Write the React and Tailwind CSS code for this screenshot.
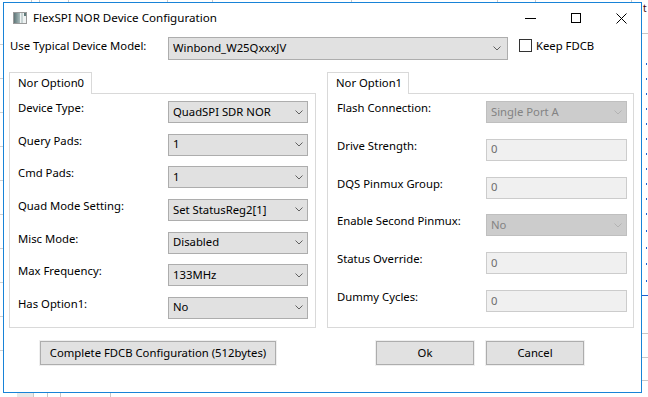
import React from 'react';
import clsx from 'clsx';

// ── small drawings ───────────────────────────────────────────────────────────
const Chevron = ({ color = '#606060' }) => (
  <svg width="8" height="5" viewBox="0 0 8 5" className="shrink-0">
    <polyline points="0.5,0.5 4,4 7.5,0.5" fill="none" stroke={color} strokeWidth="1" />
  </svg>
);

const AppIcon = () => (
  <svg width="14" height="12" viewBox="0 0 14 12" className="shrink-0">
    <defs>
      <linearGradient id="ic" x1="0" y1="0" x2="1" y2="0">
        <stop offset="0" stopColor="#5f7678" />
        <stop offset="1" stopColor="#a9bcbc" />
      </linearGradient>
    </defs>
    <rect x="0.5" y="0.5" width="13" height="11" fill="#eef2f2" stroke="#9a9a9a" />
    <rect x="1" y="1" width="6" height="10" fill="url(#ic)" />
    <rect x="8" y="1" width="2" height="10" fill="#c8d4d4" />
    <rect x="11" y="1" width="2" height="3" fill="#5f7a7a" />
  </svg>
);

// ── controls ─────────────────────────────────────────────────────────────────
const Combo = ({ value, className, disabled }) => (
  <div
    className={clsx(
      'h-[22px] flex items-center pl-[4px] pr-[4px] border shrink-0',
      disabled
        ? 'bg-[#cccccc] border-[#bfbfbf] text-[#838383]'
        : 'bg-[#e1e1e1] border-[#adadad] text-black',
      className
    )}
  >
    <span className="flex-1 truncate">{value}</span>
    <Chevron color={disabled ? '#b3b3b3' : '#606060'} />
  </div>
);

const TextBox = ({ value, className }) => (
  <div
    className={clsx(
      'h-[22px] flex items-center pl-[4px] border bg-[#f0f0f0] border-[#cccccc] text-[#6d6d6d] shrink-0',
      className
    )}
  >
    {value}
  </div>
);

const Row = ({ label, labelW, children }) => (
  <div className="flex items-start h-[22px]">
    <div className={clsx('leading-[16px] -mt-px shrink-0', labelW)}>{label}</div>
    {children}
  </div>
);

const Group = ({ tab, tabW, children, rowsClass }) => (
  <div className="flex flex-col w-[307px]">
    <div
      className={clsx(
        'relative z-10 -mb-px h-[22px] flex items-center pl-[8px] bg-white border-t border-l border-r border-[#d9d9d9]',
        tabW
      )}
    >
      Nor {tab}
    </div>
    <div className="h-[235px] border border-[#d9d9d9] bg-white">
      <div className={clsx('flex flex-col pt-[7px]', rowsClass)}>{children}</div>
    </div>
  </div>
);

const Button = ({ children, className }) => (
  <button
    className={clsx(
      'h-[24px] bg-[#e1e1e1] border border-[#adadad] text-black flex items-center justify-center outline outline-1 outline-[#efefef]',
      className
    )}
  >
    {children}
  </button>
);

// ── background behind the dialog ─────────────────────────────────────────────
const Backdrop = () => (
  <>
    {[31, 39, 68, 167, 212, 351, 497, 535, 631].map((x) => (
      <span key={x} className="absolute top-0 h-[2px] w-px bg-[#c8c8c8]" style={{ left: x }} />
    ))}
    {[44, 78, 112, 146, 180, 214, 248, 282, 316, 350].map((y) => (
      <span key={y} className="absolute left-0 w-[3px] h-px bg-[#d0d0d0]" style={{ top: y }} />
    ))}
    <span className="absolute left-[643px] top-[3px] text-[10px] leading-[10px] text-[#400000]">t</span>
    <span className="absolute left-[642px] top-[33px] w-[6px] h-px bg-[#c8c8c8]" />
    {[63, 78, 93, 108, 123, 138, 153, 168, 183, 198, 213, 230, 247, 263, 280].map((y) => (
      <span key={y} className="absolute left-[646px] w-px h-[2px] bg-[#1c5fd0]" style={{ top: y }} />
    ))}
    <span className="absolute left-[642px] top-[295px] w-[6px] h-px bg-[#1c5fd0]" />
    {[333, 357, 380].map((y) => (
      <span key={y} className="absolute left-[642px] w-[6px] h-px bg-[#c8c8c8]" style={{ top: y }} />
    ))}
    <span className="absolute left-[17px] top-[393px] w-[16px] h-[4px] bg-[#e8e8e8]" />
    {[33, 47, 60, 110].map((x) => (
      <span key={x} className="absolute top-[393px] h-[4px] w-px bg-[#c8c8c8]" style={{ left: x }} />
    ))}
  </>
);

// ── main ─────────────────────────────────────────────────────────────────────
export default function App() {
  return (
    <div
      className="relative w-[648px] h-[397px] bg-white overflow-hidden pt-[2px] pl-[3px] text-[11.3px] text-black"
      style={{ fontFamily: '"Noto Sans", "Open Sans", sans-serif' }}
    >
      <Backdrop />

      <div className="relative w-[639px] h-[391px] border border-[#1883d7] bg-white flex flex-col">
        {/* title bar */}
        <div className="h-[30px] flex items-center shrink-0">
          <div className="ml-[9px]">
            <AppIcon />
          </div>
          <span className="ml-[6px] text-[11.6px]">FlexSPI NOR Device Configuration</span>
          <div className="ml-auto mr-[14px] flex items-center">
            <span className="w-[11px] h-px bg-black" />
            <span className="ml-[35px] w-[10px] h-[10px] border border-black" />
            <svg width="11" height="11" viewBox="0 0 11 11" className="ml-[35px]">
              <path d="M0.5 0.5 L10.5 10.5 M10.5 0.5 L0.5 10.5" stroke="#000" strokeWidth="1" />
            </svg>
          </div>
        </div>

        {/* typical model */}
        <div className="mt-[4px] pl-[6px] flex items-start">
          <div className="w-[158px] leading-[16px] mt-px shrink-0">Use Typical Device Model:</div>
          <Combo value="Winbond_W25QxxxJV" className="w-[340px] !h-[23px] pr-[6px]" />
          <span className="ml-[11px] mt-[2px] w-[13px] h-[13px] border border-[#333333] bg-white shrink-0" />
          <span className="ml-[4px] leading-[16px] mt-px">Keep FDCB</span>
        </div>

        {/* option groups */}
        <div className="mt-[12px] pl-[5px] flex gap-[11px]">
          <Group tab="Option0" tabW="w-[83px]" rowsClass="pl-[8px] gap-[10.67px]">
            <Row label="Device Type:" labelW="w-[150px]">
              <Combo value="QuadSPI SDR NOR" className="w-[140px]" />
            </Row>
            <Row label="Query Pads:" labelW="w-[150px]">
              <Combo value="1" className="w-[140px]" />
            </Row>
            <Row label="Cmd Pads:" labelW="w-[150px]">
              <Combo value="1" className="w-[140px]" />
            </Row>
            <Row label="Quad Mode Setting:" labelW="w-[150px]">
              <Combo value="Set StatusReg2[1]" className="w-[140px]" />
            </Row>
            <Row label="Misc Mode:" labelW="w-[150px]">
              <Combo value="Disabled" className="w-[140px]" />
            </Row>
            <Row label="Max Frequency:" labelW="w-[150px]">
              <Combo value="133MHz" className="w-[140px]" />
            </Row>
            <Row label="Has Option1:" labelW="w-[150px]">
              <Combo value="No" className="w-[140px]" />
            </Row>
          </Group>

          <Group tab="Option1" tabW="w-[82px]" rowsClass="pl-[9px] gap-[15.8px]">
            <Row label="Flash Connection:" labelW="w-[149px]">
              <Combo value="Single Port A" className="w-[141px]" disabled />
            </Row>
            <Row label="Drive Strength:" labelW="w-[149px]">
              <TextBox value="0" className="w-[141px]" />
            </Row>
            <Row label="DQS Pinmux Group:" labelW="w-[149px]">
              <TextBox value="0" className="w-[141px]" />
            </Row>
            <Row label="Enable Second Pinmux:" labelW="w-[149px]">
              <Combo value="No" className="w-[141px]" disabled />
            </Row>
            <Row label="Status Override:" labelW="w-[149px]">
              <TextBox value="0" className="w-[141px]" />
            </Row>
            <Row label="Dummy Cycles:" labelW="w-[149px]">
              <TextBox value="0" className="w-[141px]" />
            </Row>
          </Group>
        </div>

        {/* buttons */}
        <div className="mt-[13px] flex items-start">
          <Button className="ml-[36px] w-[236px]">Complete FDCB Configuration (512bytes)</Button>
          <Button className="ml-[100px] w-[98px]">Ok</Button>
          <Button className="ml-[12px] w-[98px]">Cancel</Button>
        </div>
      </div>
    </div>
  );
}
